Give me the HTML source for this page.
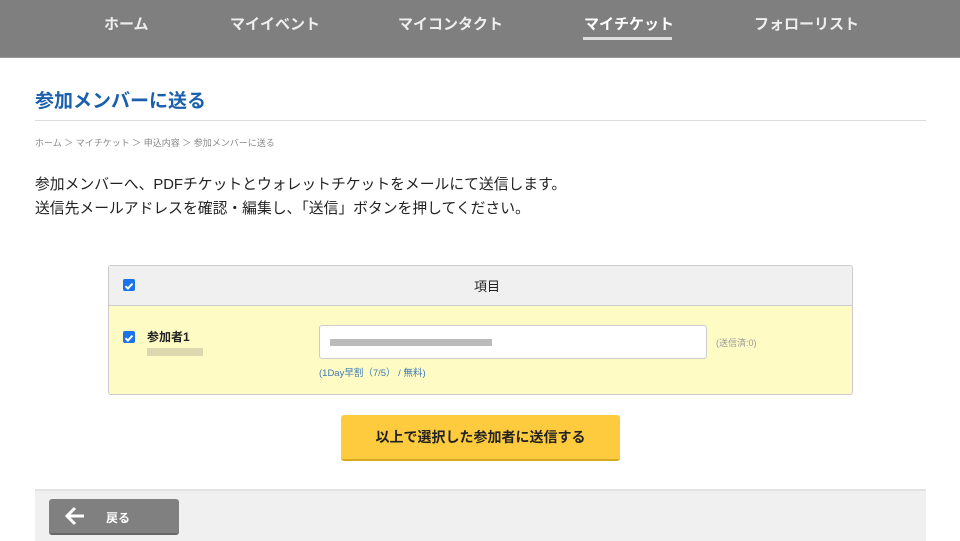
<!DOCTYPE html>
<html><head><meta charset="utf-8"><style>
*{margin:0;padding:0;box-sizing:border-box}
body{width:960px;height:541px;overflow:hidden;background:#fff;font-family:"Liberation Sans","Noto Sans CJK JP",sans-serif;color:#222;position:relative}
.nav{position:absolute;left:0;top:0;width:960px;height:58px;background:#7f7f7f;border-bottom:1px solid #999}
.nav span{position:absolute;top:13px;font-size:15px;color:#eee;font-weight:bold;white-space:nowrap}
.nav .act{color:#fff}
.nav .ul{position:absolute;left:583px;top:37px;width:89px;height:3px;background:#ddd}
.ab{position:absolute;white-space:nowrap}
.cb{position:absolute;width:12px;height:12px;background:#1a73e8;border-radius:2px}
</style></head><body>
<div class="nav">
<span style="left:104px">ホーム</span>
<span style="left:230px">マイイベント</span>
<span style="left:398px">マイコンタクト</span>
<span class="act" style="left:584px">マイチケット</span>
<span style="left:754px">フォローリスト</span>
<div class="ul"></div>
</div>
<div class="ab" style="left:35px;top:86px;font-size:19px;font-weight:bold;color:#1a5fad">参加メンバーに送る</div>
<div class="ab" style="left:35px;top:120px;width:891px;height:1px;background:#ddd"></div>
<div class="ab" style="left:35px;top:136px;font-size:9px;color:#888">ホーム ＞ マイチケット ＞ 申込内容 ＞ 参加メンバーに送る</div>
<div class="ab" style="left:35px;top:173px;font-size:14.8px;line-height:24px;color:#222">参加メンバーへ、PDFチケットとウォレットチケットをメールにて送信します。<br>送信先メールアドレスを確認・編集し、「送信」ボタンを押してください。</div>
<div class="ab" style="left:108px;top:265px;width:745px;height:130px;border:1px solid #ccc;border-radius:3px;background:#fffbc4;overflow:hidden">
 <div style="height:40px;background:#f0f0f0;border-bottom:1px solid #ccc;position:relative">
  <div class="cb" style="left:14px;top:13px"><svg width="12" height="12" viewBox="0 0 12 12"><path d="M2.5 6.2l2.4 2.4 4.6-5" stroke="#fff" stroke-width="2" fill="none"/></svg></div>
  <div style="position:absolute;left:365px;top:10px;font-size:13px">項目</div>
 </div>
 <div class="cb" style="left:14px;top:65px"><svg width="12" height="12" viewBox="0 0 12 12"><path d="M2.5 6.2l2.4 2.4 4.6-5" stroke="#fff" stroke-width="2" fill="none"/></svg></div>
 <div style="position:absolute;left:38px;top:62px;font-size:12px;font-weight:bold">参加者1</div>
 <div style="position:absolute;left:38px;top:82px;width:56px;height:8px;background:#ddd8b0"></div>
 <div style="position:absolute;left:210px;top:59px;width:388px;height:34px;background:#fff;border:1px solid #ccc;border-radius:3px"><div style="position:absolute;left:10px;top:13px;width:162px;height:7px;background:#bbb"></div></div>
 <div style="position:absolute;left:607px;top:70px;font-size:9px;color:#999">(送信済:0)</div>
 <div style="position:absolute;left:210px;top:99px;font-size:9.5px;color:#3b7ab8">(1Day早割（7/5） / 無料)</div>
</div>
<div class="ab" style="left:341px;top:415px;width:279px;height:46px;background:#fecb3e;border-radius:3px;border-bottom:2px solid #d9a920;font-size:14px;font-weight:bold;text-align:center;line-height:44px;color:#222">以上で選択した参加者に送信する</div>
<div class="ab" style="left:35px;top:489px;width:891px;height:52px;background:#f0f0f0;border-top:2px solid #e2e2e2"></div>
<div class="ab" style="left:49px;top:499px;width:130px;height:36px;background:#808080;border-radius:3px;border-bottom:2px solid #666">
<svg width="24" height="24" viewBox="0 0 24 24" style="position:absolute;left:14px;top:5px"><path d="M21 12H5M12 4l-8 8 8 8" stroke="#fff" stroke-width="3" fill="none"/></svg>
<span style="position:absolute;left:57px;top:10px;font-size:12px;color:#fff;font-weight:bold">戻る</span></div>
</body></html>
